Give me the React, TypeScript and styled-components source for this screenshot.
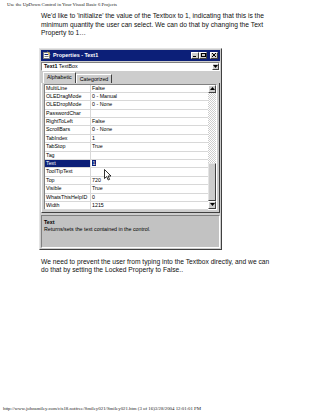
import React from "react";
import styled, { createGlobalStyle } from "styled-components";

const Global = createGlobalStyle`
  html, body { margin: 0; padding: 0; background: #fff; }
  #root { width: 320px; height: 414px; overflow: hidden; }
`;

const Page = styled.div`
  position: relative;
  width: 320px;
  height: 414px;
  display: flex;
  flex-direction: column;
  font-family: "Liberation Sans", Arial, sans-serif;
  color: #000;
`;

const Header = styled.div`
  font-family: "Liberation Serif", "Times New Roman", serif;
  font-size: 4.8px;
  line-height: 6px;
  padding: 2px 0 0 7px;
  color: #222;
`;

const Para = styled.p<{ $mt: number }>`
  margin: ${(p) => p.$mt}px 0 0 41px;
  font-size: 6.7px;
  line-height: 8.5px;
  white-space: nowrap;
  color: #111;
`;

const Footer = styled.div`
  margin-top: auto;
  padding: 0 0 2px 3px;
  font-family: "Liberation Serif", "Times New Roman", serif;
  font-size: 4.85px;
  line-height: 6px;
  color: #222;
`;

const Win = styled.div`
  margin: 10px 0 0 39px;
  width: 183px;
  height: 202px;
  box-sizing: border-box;
  background: #cdcdcd;
  border: 1px solid;
  border-color: #e4e4e4 #404040 #404040 #e4e4e4;
  padding: 1px;
  display: flex;
  flex-direction: column;
  font-family: "Liberation Sans", Arial, sans-serif;
`;

const TitleBar = styled.div`
  height: 11px;
  background: #0c1f78;
  display: flex;
  align-items: center;
  padding: 0 2px;
  gap: 2px;
`;

const TitleText = styled.span`
  flex: 1;
  color: #fff;
  font-weight: bold;
  font-size: 5.4px;
  line-height: 11px;
`;

const CapBtn = styled.div<{ $gap?: boolean }>`
  width: 8px;
  height: 7px;
  box-sizing: border-box;
  background: #cdcdcd;
  border: 1px solid;
  border-color: #fff #404040 #404040 #fff;
  margin-left: ${(p) => (p.$gap ? 1 : -2)}px;
  display: flex;
  align-items: center;
  justify-content: center;
`;

const Combo = styled.div`
  margin-top: 1px;
  height: 9px;
  box-sizing: border-box;
  background: #fff;
  border: 1px solid;
  border-color: #808080 #fff #fff #808080;
  display: flex;
  align-items: center;
  padding-left: 2px;
  font-size: 5.3px;
`;

const ComboLabel = styled.span`
  flex: 1;
  white-space: nowrap;
  b {
    font-weight: bold;
  }
`;

const SmallBtn = styled.div`
  width: 7px;
  height: 7px;
  box-sizing: border-box;
  background: #cdcdcd;
  border: 1px solid;
  border-color: #fff #404040 #404040 #fff;
  display: flex;
  align-items: center;
  justify-content: center;
`;

const Tabs = styled.div`
  margin-top: 1px;
  height: 11px;
  display: flex;
  align-items: flex-end;
  padding-left: 2px;
`;

const Tab = styled.div<{ $active?: boolean }>`
  height: ${(p) => (p.$active ? 11 : 9)}px;
  box-sizing: border-box;
  padding: 0 3px;
  border: 1px solid;
  border-bottom: none;
  border-color: #fff #404040 #404040 #fff;
  background: #cdcdcd;
  font-size: 5.3px;
  line-height: ${(p) => (p.$active ? 9 : 8)}px;
  white-space: nowrap;
`;

const Panel = styled.div`
  height: 130px;
  box-sizing: border-box;
  border: 1px solid;
  border-color: #fff #404040 #404040 #fff;
  border-top: none;
  padding: 1px 2px 2px 2px;
`;

const GridBox = styled.div`
  position: relative;
  height: 100%;
  box-sizing: border-box;
  border: 1px solid;
  border-color: #808080 #fff #fff #808080;
  display: flex;
  background: #fff;
`;

const Rows = styled.div`
  flex: 1;
  display: flex;
  flex-direction: column;
`;

const Row = styled.div`
  height: 8.4px;
  display: grid;
  grid-template-columns: 46px 1fr;
  box-sizing: border-box;
  border-bottom: 1px solid #d8d8d8;
  font-size: 5.3px;
  line-height: 7.4px;
`;

const NameCell = styled.div<{ $sel?: boolean }>`
  padding-left: 1px;
  border-right: 1px solid #d8d8d8;
  background: ${(p) => (p.$sel ? "#0c1f78" : "transparent")};
  color: ${(p) => (p.$sel ? "#fff" : "#000")};
  white-space: nowrap;
  overflow: hidden;
`;

const ValueCell = styled.div`
  padding-left: 1px;
  white-space: nowrap;
`;

const SelText = styled.span`
  background: #0c1f78;
  color: #fff;
  padding: 0 0.5px;
`;

const Scroll = styled.div`
  width: 8px;
  display: flex;
  flex-direction: column;
`;

const ScrollBtn = styled(SmallBtn)`
  width: 8px;
  height: 8px;
`;

const Track = styled.div`
  flex: 1;
  background-image: repeating-conic-gradient(#cdcdcd 0 25%, #ffffff 0 50%);
  background-size: 2px 2px;
`;

const Thumb = styled.div`
  height: 38px;
  box-sizing: border-box;
  background: #cdcdcd;
  border: 1px solid;
  border-color: #e4e4e4 #404040 #404040 #e4e4e4;
`;

const Desc = styled.div`
  margin-top: 2px;
  flex: 1;
  box-sizing: border-box;
  border: 1px solid;
  border-color: #808080 #fff #fff #808080;
  padding: 3px 2px;
  font-size: 5.3px;
  line-height: 7px;
  background: #c2c2c2;
`;

const DescTitle = styled.div`
  font-weight: bold;
`;

const Cursor = styled.svg`
  position: absolute;
  left: 59px;
  top: 84px;
`;

const Arrow = ({ up }: { up?: boolean }) => (
  <svg width="5" height="3" viewBox="0 0 5 3">
    <path d={up ? "M2.5 0 L5 3 L0 3 Z" : "M0 0 L5 0 L2.5 3 Z"} fill="#000" />
  </svg>
);

const rows: [string, string][] = [
  ["MultiLine", "False"],
  ["OLEDragMode", "0 - Manual"],
  ["OLEDropMode", "0 - None"],
  ["PasswordChar", ""],
  ["RightToLeft", "False"],
  ["ScrollBars", "0 - None"],
  ["TabIndex", "1"],
  ["TabStop", "True"],
  ["Tag", ""],
  ["Text", "1"],
  ["ToolTipText", ""],
  ["Top", "720"],
  ["Visible", "True"],
  ["WhatsThisHelpID", "0"],
  ["Width", "1215"],
];

export default function App() {
  return (
    <Page>
      <Global />
      <Header>Use the UpDown Control in Your Visual Basic 6 Projects</Header>
      <Para $mt={4}>
        We'd like to 'initialize' the value of the Textbox to 1, indicating that this is the
        <br />
        minimum quantity the user can select. We can do that by changing the Text
        <br />
        Property to 1…
      </Para>
      <Win>
        <TitleBar>
          <svg width="8" height="8" viewBox="0 0 8 8">
            <rect x="0.5" y="1.5" width="6" height="6" fill="#fff" stroke="#808080" />
            <rect x="1.5" y="3" width="4" height="1" fill="#0c1f78" />
            <rect x="1.5" y="5" width="4" height="1" fill="#808080" />
            <path d="M4 0 L7.5 3.5 L6 5 Z" fill="#e0c060" />
          </svg>
          <TitleText>Properties - Text1</TitleText>
          <CapBtn>
            <svg width="4" height="4" viewBox="0 0 4 4">
              <rect x="0" y="3" width="3" height="1" fill="#000" />
            </svg>
          </CapBtn>
          <CapBtn>
            <svg width="5" height="4" viewBox="0 0 5 4">
              <rect x="0.5" y="0.5" width="4" height="3" fill="none" stroke="#000" />
              <rect x="0" y="0" width="5" height="1" fill="#000" />
            </svg>
          </CapBtn>
          <CapBtn $gap>
            <svg width="4" height="4" viewBox="0 0 4 4">
              <path d="M0 0 L4 4 M4 0 L0 4" stroke="#000" strokeWidth="1" />
            </svg>
          </CapBtn>
        </TitleBar>
        <Combo>
          <ComboLabel>
            <b>Text1</b> TextBox
          </ComboLabel>
          <SmallBtn>
            <Arrow />
          </SmallBtn>
        </Combo>
        <Tabs>
          <Tab $active>Alphabetic</Tab>
          <Tab>Categorized</Tab>
        </Tabs>
        <Panel>
          <GridBox>
            <Rows>
              {rows.map(([n, v]) => (
                <Row key={n}>
                  <NameCell $sel={n === "Text"}>{n}</NameCell>
                  <ValueCell>{n === "Text" ? <SelText>{v}</SelText> : v}</ValueCell>
                </Row>
              ))}
            </Rows>
            <Scroll>
              <ScrollBtn>
                <Arrow up />
              </ScrollBtn>
              <Track />
              <Thumb />
              <ScrollBtn>
                <Arrow />
              </ScrollBtn>
            </Scroll>
            <Cursor width="8" height="12" viewBox="0 0 8 12">
              <path
                d="M0.5 0.5 L0.5 9.5 L2.7 7.5 L4.2 11 L5.6 10.4 L4.1 7 L7 7 Z"
                fill="#fff"
                stroke="#000"
                strokeWidth="0.8"
              />
            </Cursor>
          </GridBox>
        </Panel>
        <Desc>
          <DescTitle>Text</DescTitle>
          Returns/sets the text contained in the control.
        </Desc>
      </Win>
      <Para $mt={8}>
        We need to prevent the user from typing into the Textbox directly, and we can
        <br />
        do that by setting the Locked Property to False..
      </Para>
      <Footer>
        http://www.johnsmiley.com/cis18.notfree/Smiley021/Smiley021.htm (3 of 16)3/28/2004 12:01:01 PM
      </Footer>
    </Page>
  );
}
